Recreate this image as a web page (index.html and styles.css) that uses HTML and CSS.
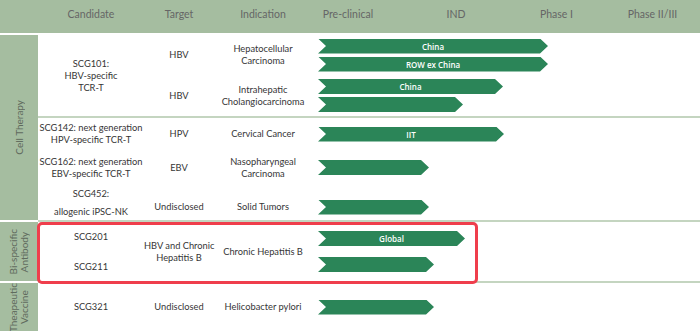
FILE: index.html
```html
<!DOCTYPE html>
<html>
<head>
<meta charset="utf-8">
<link rel="stylesheet" href="styles.css">
</head>
<body>
<div class="table">
  <div class="head">
    <div></div>
    <div class="hc">Candidate</div>
    <div class="hc">Target</div>
    <div class="hc">Indication</div>
    <div class="phases">
      <div class="hc pre">Pre-clinical</div>
      <div class="hc">IND</div>
      <div class="hc">Phase I</div>
      <div class="hc">Phase II/III</div>
    </div>
  </div>

  <div class="group g1">
    <div class="side"><span>Cell Therapy</span></div>
    <div class="rows">
      <div class="row r101">
        <div class="cand span2">SCG101:<br>HBV-specific<br>TCR-T</div>
        <div class="cell">HBV</div>
        <div class="cell">Hepatocellular<br>Carcinoma</div>
        <div class="bars">
          <div class="bar" style="width:230px">China</div>
          <div class="bar" style="width:230px">ROW ex China</div>
        </div>
        <div class="cell">HBV</div>
        <div class="cell">Intrahepatic<br>Cholangiocarcinoma</div>
        <div class="bars">
          <div class="bar" style="width:185px">China</div>
          <div class="bar" style="width:145px"></div>
        </div>
      </div>
      <div class="row single sep h34">
        <div class="cand">SCG142: next generation<br>HPV-specific TCR-T</div>
        <div class="cell">HPV</div>
        <div class="cell">Cervical Cancer</div>
        <div class="bars"><div class="bar" style="width:186px">IIT</div></div>
      </div>
      <div class="row single h35">
        <div class="cand">SCG162: next generation<br>EBV-specific TCR-T</div>
        <div class="cell">EBV</div>
        <div class="cell">Nasopharyngeal<br>Carcinoma</div>
        <div class="bars"><div class="bar" style="width:111px"></div></div>
      </div>
      <div class="row single h35">
        <div class="cand wide">SCG452:<br>allogenic iPSC-NK</div>
        <div class="cell">Undisclosed</div>
        <div class="cell">Solid Tumors</div>
        <div class="bars"><div class="bar" style="width:111px"></div></div>
      </div>
    </div>
  </div>

  <div class="group gn">
    <div class="side"><span>Bi-specific<br>Antibody</span></div>
    <div class="rows">
      <div class="row single h59">
        <div class="cand pair"><span>SCG201</span><span>SCG211</span></div>
        <div class="cell">HBV and Chronic<br>Hepatitis B</div>
        <div class="cell">Chronic Hepatitis B</div>
        <div class="bars gap11">
          <div class="bar" style="width:147px">Global</div>
          <div class="bar" style="width:116px"></div>
        </div>
      </div>
    </div>
  </div>

  <div class="group gn">
    <div class="side"><span>Theapeutic<br>Vaccine</span></div>
    <div class="rows">
      <div class="row single h48">
        <div class="cand">SCG321</div>
        <div class="cell">Undisclosed</div>
        <div class="cell">Helicobacter pylori</div>
        <div class="bars"><div class="bar" style="width:116px"></div></div>
      </div>
    </div>
  </div>

  <div class="highlight"></div>
</div>
</body>
</html>
```

FILE: styles.css
```css
* { box-sizing: border-box; }
html, body { margin: 0; padding: 0; background: #fff; }
body {
  font-family: Lato, "Liberation Sans", sans-serif;
  color: #363636;
  font-size: 9.3px;
  line-height: 12px;
  width: 700px;
  height: 331px;
  overflow: hidden;
}
.table { position: relative; width: 700px; }

.head {
  height: 33px;
  background: #a5bda0;
  display: grid;
  grid-template-columns: 38px 106px 70px 98px 1fr;
  align-items: center;
  color: #666;
  font-size: 10.5px;
}
.hc { text-align: center; padding-bottom: 5px; white-space: nowrap; }
.phases {
  display: grid;
  grid-template-columns: 92px 104px 97px 95px;
  align-items: center;
}
.hc.pre { padding-right: 20px; }

.group {
  display: grid;
  grid-template-columns: 38px 1fr;
}
.g1 { margin-top: 2px; }
.gn .side { margin-top: 2px; }
.gn .rows { border-top: 2px solid #c4d5c0; }

.side {
  background: #a5bda0;
  display: flex;
  align-items: center;
  justify-content: center;
  color: #5f6a5d;
  font-size: 10px;
  line-height: 11px;
  overflow: hidden;
}
.side span {
  writing-mode: vertical-rl;
  transform: rotate(180deg);
  text-align: center;
  white-space: nowrap;
}

.row {
  display: grid;
  grid-template-columns: 106px 70px 98px 1fr;
  align-items: center;
}
.r101 { grid-template-rows: 40px 41px; }
.span2 { grid-row: span 2; }
.sep { border-top: 2px solid #c4d5c0; }
.h34 { height: 34px; }
.h35 { height: 35px; }
.h59 { height: 59px; }
.h48 { height: 48px; }

.cand, .cell { text-align: center; white-space: nowrap; }
.wide { line-height: 18px; padding-bottom: 8px; }
.pair {
  display: flex;
  flex-direction: column;
  gap: 18px;
  align-self: center;
}

.bars {
  display: flex;
  flex-direction: column;
  gap: 3px;
  padding-left: 6px;
}
.bars.gap11 { gap: 11px; }
.bar {
  height: 15px;
  background: #2b8558;
  color: #fff;
  font-family: "Open Sans", sans-serif;
  font-size: 8px;
  font-weight: 600;
  line-height: 15px;
  text-align: center;
  clip-path: polygon(0 0, calc(100% - 8px) 0, 100% 50%, calc(100% - 8px) 100%, 0 100%, 8px 50%);
}

.highlight {
  position: absolute;
  left: 37px;
  top: 222px;
  width: 441px;
  height: 62px;
  border: 3px solid #ef3e4c;
  border-radius: 5px;
  pointer-events: none;
}
```
